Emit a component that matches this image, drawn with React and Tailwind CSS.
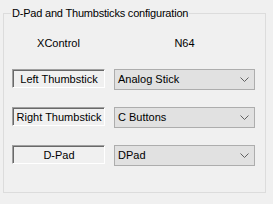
import React from 'react';

const rows = [
  { left: 'Left Thumbstick', right: 'Analog Stick' },
  { left: 'Right Thumbstick', right: 'C Buttons' },
  { left: 'D-Pad', right: 'DPad' },
];

function Chevron() {
  return (
    <svg width="9" height="6" viewBox="0 0 9 6" className="shrink-0">
      <path d="M0.5 0.5 L4.5 4.5 L8.5 0.5" fill="none" stroke="#606060" strokeWidth="1" />
    </svg>
  );
}

export default function App() {
  return (
    <div
      className="w-[273px] h-[204px] bg-[#f0f0f0] pt-[13px] pl-[3px] text-[11px] text-black"
      style={{ fontFamily: '"Liberation Sans", Arial, sans-serif' }}
    >
      <div className="relative w-[263px] h-[180px] border border-[#dcdcdc] px-[8px] pt-[21px]">
        {/* group title sits on the top border */}
        <div className="absolute left-[7px] top-[-9px] bg-[#f0f0f0] px-[1px] leading-[16px] whitespace-nowrap tracking-[-0.2px]">
          D-Pad and Thumbsticks configuration
        </div>

        <div className="grid grid-cols-[93px_141px] gap-x-[9px] leading-[16px]">
          <div className="text-center">XControl</div>
          <div className="text-center">N64</div>
        </div>

        <div className="flex flex-col gap-[17px] mt-[18px]">
          {rows.map((r) => (
            <div key={r.left} className="grid grid-cols-[93px_141px] gap-x-[9px] items-start">
              <div className="h-[19px] border border-t-[#a0a0a0] border-l-[#a0a0a0] border-b-white border-r-white">
                <div className="h-full border-t border-l border-[#696969] flex items-center justify-center leading-none whitespace-nowrap">
                  {r.left}
                </div>
              </div>
              <div className="h-[21px] bg-[#e1e1e1] border border-[#adadad] flex items-center justify-between pl-[3px] pr-[5px]">
                <span className="leading-none whitespace-nowrap">{r.right}</span>
                <Chevron />
              </div>
            </div>
          ))}
        </div>
      </div>
    </div>
  );
}
